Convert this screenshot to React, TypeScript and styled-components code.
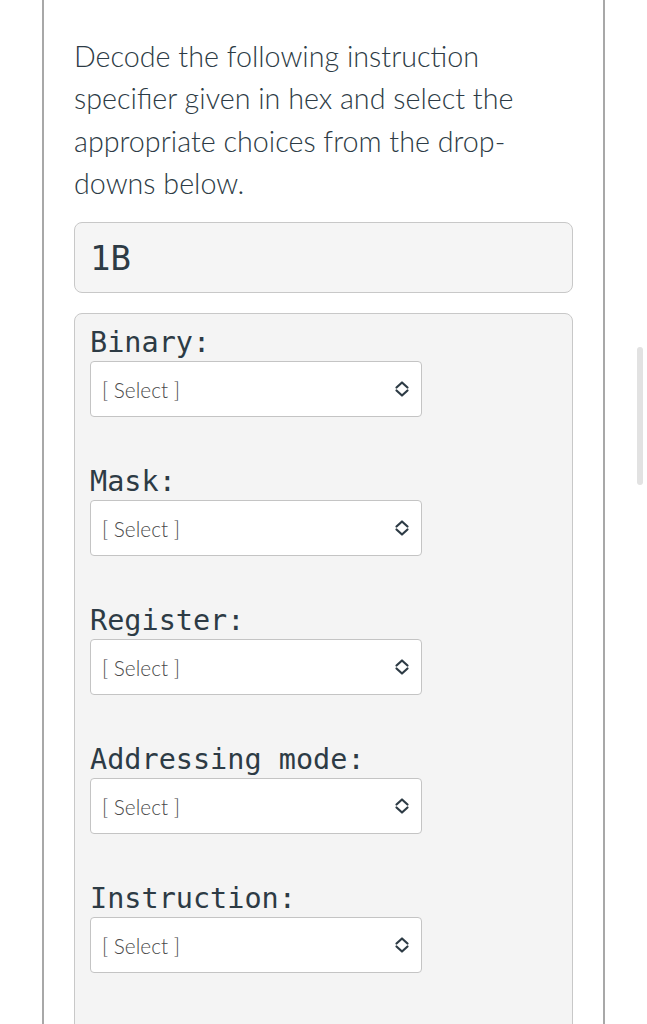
import React from "react";
import styled, { createGlobalStyle } from "styled-components";

const Global = createGlobalStyle`
  html, body { margin: 0; padding: 0; background: #fff; }
  body { width: 647px; height: 1024px; overflow: hidden; }
`;

const Page = styled.div`
  position: relative;
  width: 647px;
  height: 1024px;
  overflow: hidden;
`;

const Frame = styled.div`
  margin-left: 42px;
  width: 563px;
  min-height: 1024px;
  box-sizing: border-box;
  border-left: 2px solid #a8a8a8;
  border-right: 2px solid #a8a8a8;
  padding: 35px 30px 0 30px;
`;

const Prompt = styled.p`
  margin: 0 0 18px 0;
  font-family: Lato, "Open Sans", sans-serif;
  font-weight: 300;
  font-size: 28.7px;
  line-height: 42.3px;
  color: #2d3b45;
`;

const HexBox = styled.div`
  height: 71px;
  box-sizing: border-box;
  border: 1px solid #c8c8c8;
  border-radius: 8px;
  background: #f5f5f5;
  display: flex;
  align-items: center;
  padding-left: 15px;
  font-family: "DejaVu Sans Mono", monospace;
  font-size: 34px;
  color: #2d3b45;
  margin-bottom: 20px;
`;

const AnswerBox = styled.div`
  box-sizing: border-box;
  border: 1px solid #c8c8c8;
  border-radius: 8px;
  background: #f4f4f4;
  padding: 12px 15px 60px 15px;
  min-height: 760px;
`;

const Field = styled.div<{ $first?: boolean }>`
  margin-top: ${(p) => (p.$first ? "0" : "48px")};
`;

const Label = styled.div`
  font-family: "DejaVu Sans Mono", monospace;
  font-size: 28.5px;
  line-height: 34px;
  color: #2d3b45;
  height: 34px;
  margin-bottom: 1px;
`;

const SelectBox = styled.div`
  width: 332px;
  height: 56px;
  box-sizing: border-box;
  border: 1px solid #c4c4c4;
  border-radius: 4px;
  background: #fff;
  display: flex;
  align-items: center;
  justify-content: space-between;
  padding: 0 10px 0 11px;
`;

const Placeholder = styled.span`
  font-family: Lato, "Open Sans", sans-serif;
  font-weight: 300;
  font-size: 20.8px;
  color: #4a4a4a;
`;

const Chevron = styled.svg`
  width: 18px;
  height: 18px;
  display: block;
`;

const Scrollbar = styled.div`
  position: absolute;
  left: 637px;
  top: 347px;
  width: 6px;
  height: 138px;
  border-radius: 3px;
  background: #e2e2e2;
`;

const fields = ["Binary:", "Mask:", "Register:", "Addressing mode:", "Instruction:"];

export default function App() {
  return (
    <Page>
      <Global />
      <Frame>
        <Prompt>
          Decode the following instruction specifier given in hex and select the appropriate choices from the drop-downs below.
        </Prompt>
        <HexBox>1B</HexBox>
        <AnswerBox>
          {fields.map((f, i) => (
            <Field key={f} $first={i === 0}>
              <Label>{f}</Label>
              <SelectBox>
                <Placeholder>[ Select ]</Placeholder>
                <Chevron viewBox="0 0 18 18" fill="none" stroke="#2d3b45" strokeWidth="2.2" strokeLinecap="round" strokeLinejoin="round">
                  <polyline points="3.5,7.5 9,2.5 14.5,7.5" />
                  <polyline points="3.5,10.5 9,15.5 14.5,10.5" />
                </Chevron>
              </SelectBox>
            </Field>
          ))}
        </AnswerBox>
      </Frame>
      <Scrollbar />
    </Page>
  );
}
